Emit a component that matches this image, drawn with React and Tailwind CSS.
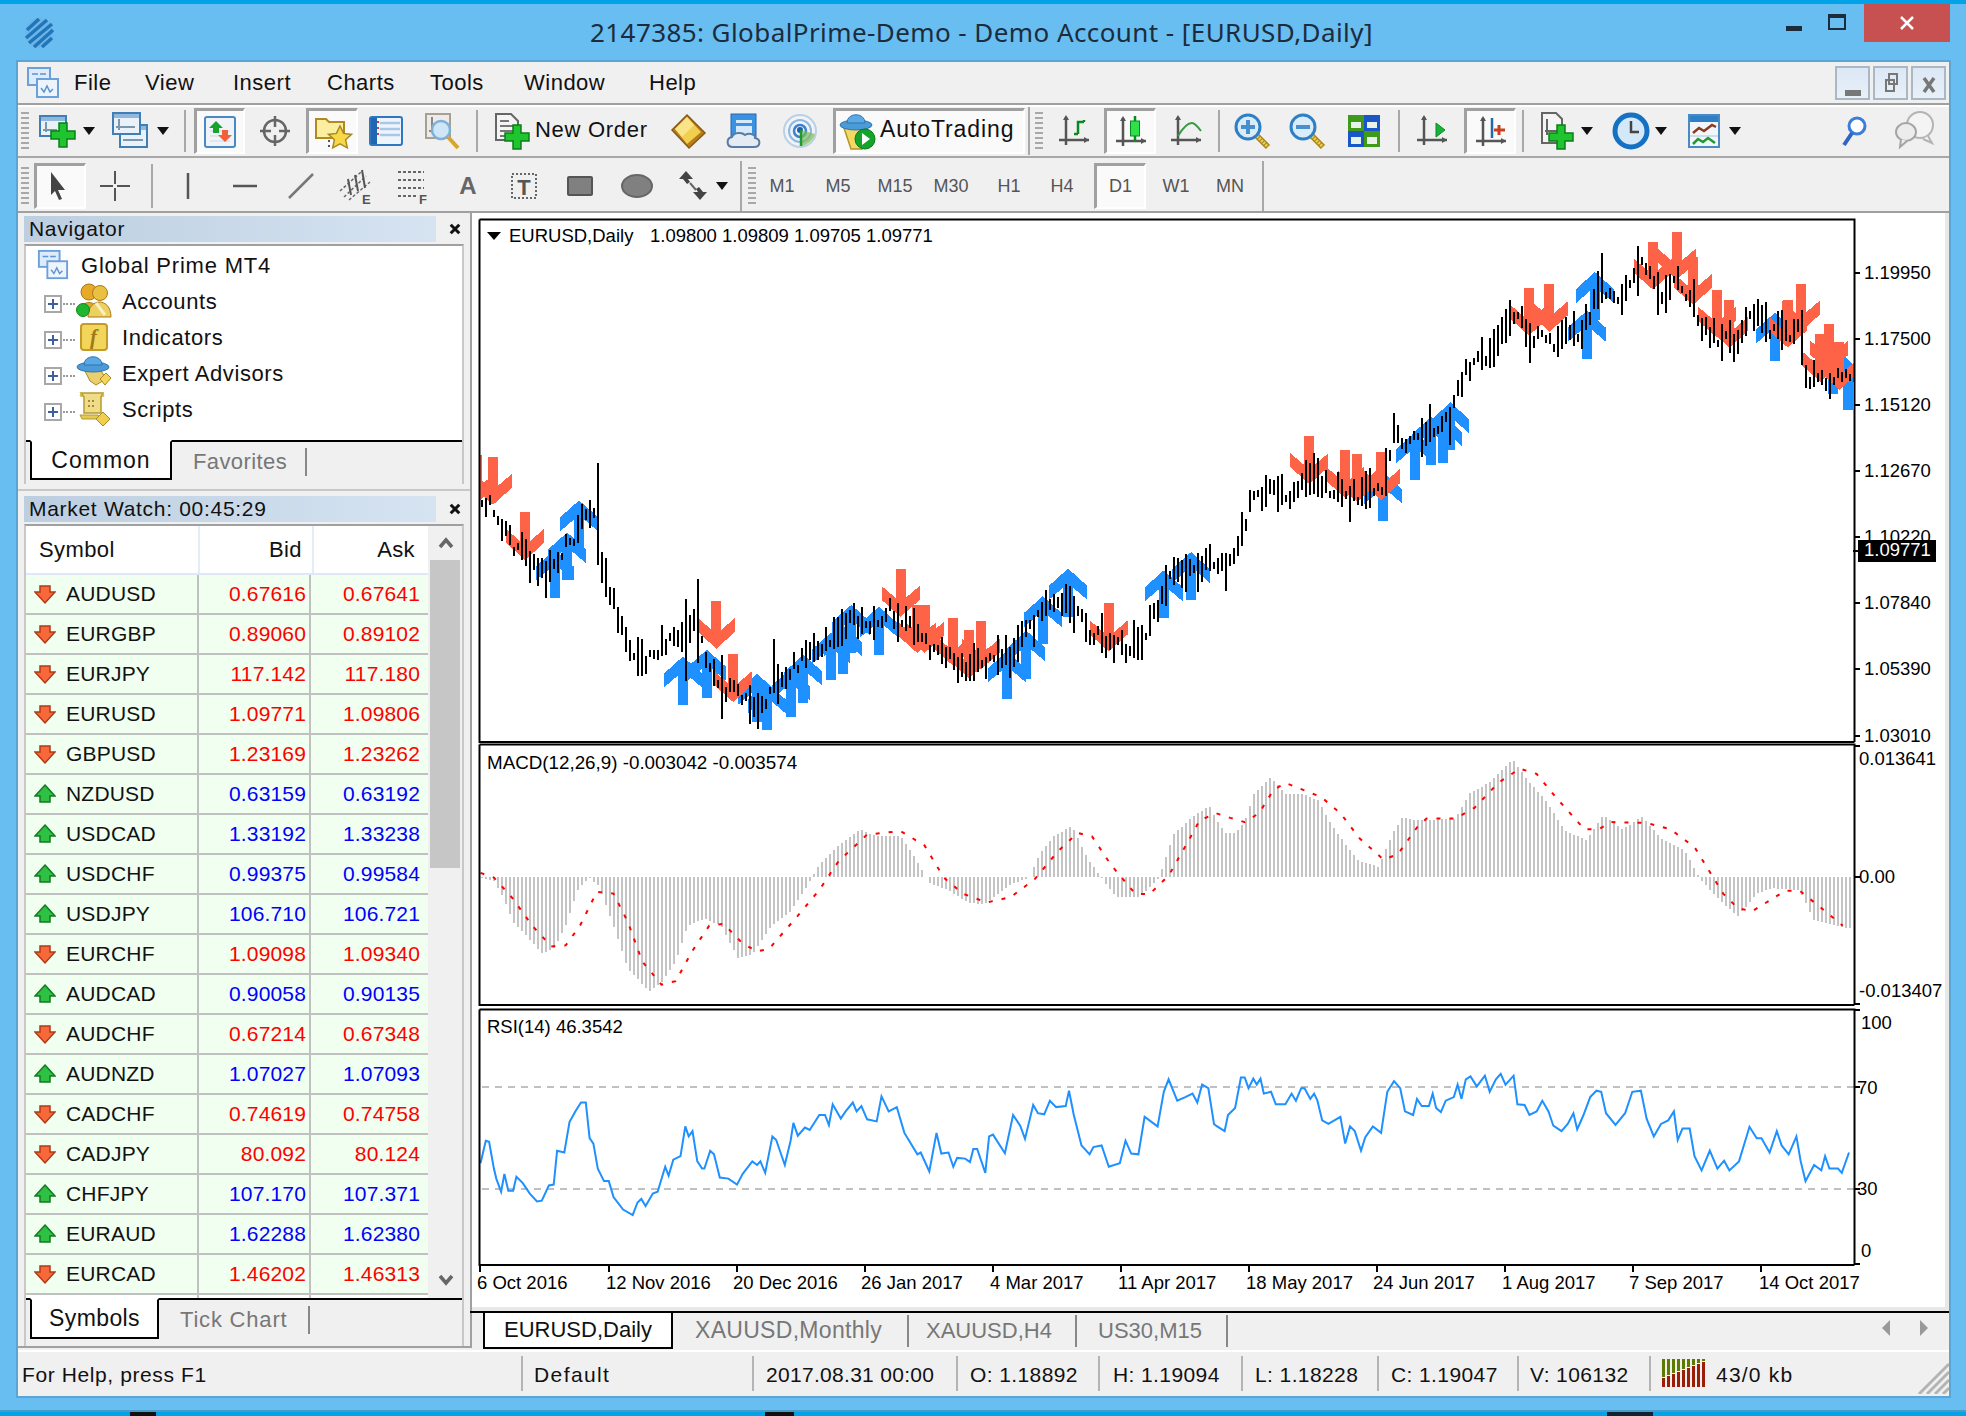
import React from "react";

// traced chart geometry, screen px come out of these two helpers
const leftX = (x) => 470 + x / 2.09;
const rightX = (x) => 1216 + x / 2.09;
const mainY = (y) => 210 + y / 2.9;
const lowY = (y) => 740 + y / 2.8;

const pts = (l, r, fy) => [
  ...l.map(([x, y]) => [leftX(x), fy(y)]),
  ...r.map(([x, y]) => [rightX(x), fy(y)]),
];

const pricePath = pts(
  [[20,830],[50,870],[60,920],[90,970],[125,1020],[150,1060],[180,1020],[210,960],[240,890],[262,900],[280,1060],[300,1140],[320,1210],[340,1290],[370,1310],[400,1270],[430,1250],[470,1200],[490,1280],[520,1370],[550,1400],[600,1430],[640,1400],[680,1320],[720,1280],[760,1230],[800,1190],[850,1190],[880,1160],[910,1190],[950,1260],[990,1290],[1020,1320],[1070,1320],[1100,1290],[1130,1290],[1170,1220],[1210,1150],[1250,1130],[1280,1200],[1330,1250],[1370,1270],[1400,1260],[1430,1180],[1470,1060],[1510,1050],[1560,1010]],
  [[25,1050],[50,950],[75,840],[100,810],[130,820],[155,820],[190,770],[225,800],[270,830],[310,840],[350,790],[370,650],[400,680],[440,640],[490,610],[520,470],[560,430],[600,340],[620,290],[660,370],[710,390],[740,360],[770,340],[805,230],[830,270],[860,240],[880,150],[910,190],[930,240],[960,200],[1000,260],[1015,350],[1060,370],[1080,390],[1120,300],[1160,350],[1220,350],[1240,480],[1290,490],[1325,480]],
  mainY
);

const histPath = pts(
  [[22,385],[50,395],[70,440],[90,510],[120,550],[150,598],[175,585],[200,520],[225,420],[250,385],[270,410],[300,520],[330,640],[375,705],[400,680],[430,620],[455,520],[490,500],[525,520],[560,610],[590,600],[630,520],[670,480],[700,420],[730,350],[770,295],[815,250],[850,270],[900,270],[930,330],[960,400],[1000,420],[1040,455],[1075,460],[1130,405],[1170,385],[1190,320],[1220,270],[1258,240],[1290,330],[1320,385],[1350,440],[1400,440],[1440,385],[1470,265],[1510,215],[1545,185]],
  [[0,220],[20,260],[40,260],[60,230],[80,150],[115,105],[145,150],[180,150],[215,170],[240,235],[270,290],[300,340],[340,355],[370,260],[390,215],[420,225],[500,220],[530,150],[570,120],[620,55],[650,110],[690,170],[730,255],[775,280],[810,210],[850,250],[890,215],[930,275],[980,310],[1010,385],[1040,430],[1090,495],[1130,430],[1160,415],[1220,420],[1250,505],[1310,525],[1325,525]],
  lowY
);

const signalPath = pts(
  [[22,372],[50,385],[90,445],[130,520],[170,578],[200,575],[230,520],[265,425],[300,430],[330,510],[360,620],[400,685],[430,675],[465,590],[500,520],[530,515],[570,570],[600,592],[625,585],[680,500],[730,420],[770,340],[830,265],[900,255],[950,295],[990,385],[1030,430],[1080,455],[1130,440],[1180,390],[1230,310],[1270,260],[1300,270],[1340,350],[1390,430],[1420,432],[1460,380],[1490,310],[1525,225]],
  [[0,205],[30,218],[60,230],[90,205],[120,140],[145,120],[220,160],[260,205],[300,275],[350,335],[380,320],[420,245],[440,220],[500,220],[540,190],[590,120],[635,80],[670,95],[710,160],[770,250],[800,250],[825,230],[900,232],[950,250],[1000,300],[1060,430],[1090,470],[1120,480],[1190,422],[1220,422],[1260,465],[1310,520]],
  lowY
);

const rsiPath = pts(
  [[22,1185],[33,1122],[40,1125],[50,1200],[55,1228],[65,1265],[72,1215],[80,1262],[90,1262],[97,1223],[110,1240],[125,1270],[140,1292],[150,1290],[165,1247],[175,1245],[182,1150],[197,1155],[208,1070],[220,1040],[232,1015],[242,1015],[250,1115],[258,1130],[267,1200],[280,1235],[290,1235],[300,1280],[320,1315],[340,1330],[350,1295],[358,1285],[367,1305],[382,1270],[392,1265],[408,1195],[415,1220],[425,1175],[440,1165],[450,1082],[457,1110],[465,1095],[475,1180],[485,1200],[490,1200],[502,1150],[510,1160],[522,1225],[540,1228],[558,1245],[570,1215],[590,1180],[600,1190],[607,1180],[617,1212],[632,1110],[640,1120],[658,1190],[670,1122],[676,1072],[685,1108],[700,1085],[710,1092],[730,1050],[742,1050],[750,1078],[758,1020],[775,1060],[785,1040],[800,1015],[808,1040],[818,1025],[830,1062],[850,1068],[860,998],[875,1040],[892,1028],[908,1100],[935,1160],[942,1155],[960,1208],[975,1100],[985,1158],[1000,1155],[1010,1195],[1018,1170],[1035,1172],[1045,1182],[1052,1145],[1060,1145],[1077,1212],[1085,1110],[1093,1105],[1118,1157],[1135,1050],[1150,1080],[1160,1117],[1177,1022],[1187,1045],[1200,1048],[1212,1010],[1225,1028],[1245,1025],[1252,982],[1262,1050],[1278,1135],[1295,1160],[1303,1140],[1320,1135],[1335,1195],[1358,1185],[1370,1122],[1382,1158],[1397,1160],[1410,1055],[1425,1070],[1437,1082],[1450,985],[1460,950],[1478,1010],[1495,1000],[1510,990],[1520,1015],[1530,965],[1543,975],[1555,1075]],
  [[0,1080],[18,1095],[25,1050],[40,1030],[52,945],[60,945],[68,975],[78,948],[85,965],[93,948],[100,990],[115,985],[125,1020],[145,1020],[158,990],[167,1010],[178,975],[185,975],[197,1005],[205,990],[212,1010],[222,1065],[235,1075],[260,1055],[270,1130],[280,1082],[290,1095],[303,1150],[312,1112],[328,1082],[345,1100],[358,985],[372,955],[385,975],[395,1040],[412,1050],[420,1005],[430,1025],[445,1025],[453,990],[460,1030],[470,1042],[480,1010],[497,1000],[505,965],[513,1005],[522,950],[532,942],[545,970],[562,940],[572,985],[585,950],[595,935],[605,965],[622,940],[630,1020],[645,1022],[655,1050],[670,1040],[682,1010],[695,1040],[705,1080],[722,1095],[735,1075],[747,1045],[755,1090],[768,1050],[782,1000],[795,982],[805,985],[815,1045],[835,1078],[855,1045],[870,985],[888,982],[900,1060],[915,1110],[930,1075],[945,1065],[957,1040],[965,1120],[975,1088],[990,1088],[1000,1165],[1015,1205],[1032,1150],[1048,1200],[1062,1178],[1073,1205],[1093,1180],[1115,1083],[1130,1115],[1140,1115],[1157,1155],[1172,1095],[1182,1135],[1197,1160],[1213,1110],[1222,1180],[1232,1235],[1250,1190],[1265,1205],[1273,1165],[1282,1200],[1300,1200],[1308,1212],[1323,1155]],
  lowY
);

const blueTips = [
  ...[[228,842],[203,935],[177,985],[445,1295],[495,1275],[600,1345],[620,1370],[670,1330],[697,1290],[755,1225],[780,1205],[797,1145],[855,1150],[1122,1280],[1163,1220],[1197,1120],[1250,1040],[1450,1045],[1507,992]].map(([x, y]) => [leftX(x), mainY(y)]),
  ...[[350,762],[416,645],[450,600],[474,594],[490,558],[775,292],[792,180],[1168,298],[1320,442],[1290,395]].map(([x, y]) => [rightX(x), mainY(y)]),
];
const redTips = [
  ...[[15,850],[48,855],[115,1015],[515,1272],[550,1427],[900,1180],[935,1285],[950,1285],[1010,1322],[1043,1358],[1068,1332],[1335,1280]].map(([x, y]) => [leftX(x), mainY(y)]),
  ...[[195,795],[270,835],[295,846],[345,841],[654,364],[697,353],[913,231],[963,202],[997,275],[1047,370],[1073,399],[1195,399],[1222,353],[1263,498],[1282,469],[1303,521]].map(([x, y]) => [rightX(x), mainY(y)]),
];

const spikes = [
  [leftX(265), mainY(735), mainY(1030)], [leftX(475), mainY(1070), mainY(1315)], [leftX(449), mainY(1128), mainY(1365)],
  [leftX(632), mainY(1245), mainY(1400)], [leftX(600), mainY(1400), mainY(1505)], [leftX(525), mainY(1290), mainY(1475)],
  [rightX(805), mainY(125), mainY(270)], [rightX(880), mainY(105), mainY(250)], [rightX(352), mainY(690), mainY(830)],
  [rightX(1225), mainY(290), mainY(450)], [rightX(1230), mainY(450), mainY(515)], [rightX(920), mainY(180), mainY(305)],
];

const lerp = (path, x) => {
  if (x <= path[0][0]) return path[0][1];
  for (let i = 1; i < path.length; i++) {
    if (x <= path[i][0]) {
      const [x0, y0] = path[i - 1];
      const [x1, y1] = path[i];
      return y0 + ((y1 - y0) * (x - x0)) / (x1 - x0);
    }
  }
  return path[path.length - 1][1];
};

let seed = 4711;
const rnd = () => {
  seed = (seed * 1103515245 + 12345) & 0x7fffffff;
  return seed / 0x7fffffff;
};

const stepXs = [];
for (let x = 482; x < 1853; x += 4) stepXs.push(x);

const bars = stepXs.map((x) => {
  const spike = spikes.find((s) => Math.abs(s[0] - x) <= 2);
  if (spike) return [x, spike[1], spike[2]];
  const mid = lerp(pricePath, x) + (rnd() - 0.5) * 16;
  const r = rnd();
  const h = 7 + r * r * 34;
  return [x, mid - h / 2, mid + h / 2];
});

const barsD = bars.map(([x, a, b]) => `M${x} ${a.toFixed(0)}V${b.toFixed(0)}`).join("");
const histD = stepXs.map((x) => `M${x} 877V${lerp(histPath, x).toFixed(0)}`).join("");
const signalLine = signalPath.map(([x, y]) => `${x.toFixed(1)},${y.toFixed(1)}`).join(" ");
const rsiLine = rsiPath.map(([x, y]) => `${x.toFixed(1)},${y.toFixed(1)}`).join(" ");

const upArrow = (x, y) =>
  `${x},${y} ${x + 19},${y + 17} ${x + 19},${y + 31} ${x + 5},${y + 19} ${x + 5},${y + 48} ${x - 5},${y + 48} ${x - 5},${y + 19} ${x - 19},${y + 31} ${x - 19},${y + 17}`;
const downArrow = (x, y) =>
  `${x},${y} ${x + 19},${y - 17} ${x + 19},${y - 31} ${x + 5},${y - 19} ${x + 5},${y - 48} ${x - 5},${y - 48} ${x - 5},${y - 19} ${x - 19},${y - 31} ${x - 19},${y - 17}`;

const priceLabels = [
  ["1.19950", 273], ["1.17500", 339], ["1.15120", 405], ["1.12670", 471],
  ["1.10220", 537], ["1.07840", 603], ["1.05390", 669], ["1.03010", 736],
];

const timeLabels = [
  ["6 Oct 2016", 477, 480], ["12 Nov 2016", 606, 609], ["20 Dec 2016", 733, 737], ["26 Jan 2017", 861, 865],
  ["4 Mar 2017", 990, 993], ["11 Apr 2017", 1118, 1121], ["18 May 2017", 1246, 1249], ["24 Jun 2017", 1373, 1377],
  ["1 Aug 2017", 1502, 1505], ["7 Sep 2017", 1629, 1633], ["14 Oct 2017", 1759, 1761],
];

const symbols = [
  ["AUDUSD", "0.67616", "0.67641", "down"], ["EURGBP", "0.89060", "0.89102", "down"],
  ["EURJPY", "117.142", "117.180", "down"], ["EURUSD", "1.09771", "1.09806", "down"],
  ["GBPUSD", "1.23169", "1.23262", "down"], ["NZDUSD", "0.63159", "0.63192", "up"],
  ["USDCAD", "1.33192", "1.33238", "up"], ["USDCHF", "0.99375", "0.99584", "up"],
  ["USDJPY", "106.710", "106.721", "up"], ["EURCHF", "1.09098", "1.09340", "down"],
  ["AUDCAD", "0.90058", "0.90135", "up"], ["AUDCHF", "0.67214", "0.67348", "down"],
  ["AUDNZD", "1.07027", "1.07093", "up"], ["CADCHF", "0.74619", "0.74758", "down"],
  ["CADJPY", "80.092", "80.124", "down"], ["CHFJPY", "107.170", "107.371", "up"],
  ["EURAUD", "1.62288", "1.62380", "up"], ["EURCAD", "1.46202", "1.46313", "down"],
];

const textProps = { fontFamily: "'Liberation Sans', sans-serif", fontSize: 18.5, fill: "#000", dominantBaseline: "middle", dy: 1 };

/* ---------- small icons ---------- */

const Svg = ({ size = 36, box = 36, children, className = "" }) => (
  <svg width={size} height={size} viewBox={`0 0 ${box} ${box}`} className={`overflow-visible ${className}`}>
    {children}
  </svg>
);

const Plus = ({ x = 20, y = 20 }) => (
  <path
    transform={`translate(${x} ${y})`}
    d="M-4 -12h8v8h8v8h-8v8h-8v-8h-8v-8h8z"
    fill="#1fc52f"
    stroke="#0b7d17"
    strokeWidth="1.5"
  />
);

const Win = ({ x, y, w, h }) => (
  <g>
    <rect x={x} y={y} width={w} height={h} fill="#eaf1f9" stroke="#3f7fb8" strokeWidth="2" />
    <rect x={x + 1} y={y + 1} width={w - 2} height="4" fill="#8fb8dc" />
  </g>
);

const Axes = ({ children }) => (
  <Svg>
    <path d="M10 4v28M3 27h30" stroke="#555" strokeWidth="2.5" fill="none" />
    <path d="M10 2l-3 5h6zM33 27l-5-3v6z" fill="#555" />
    {children}
  </Svg>
);

const NewChartIcon = () => (
  <Svg>
    <Win x={1} y={3} w={26} h={20} />
    <path d="M7 9v10M4 17h14" stroke="#7a97ad" strokeWidth="2" />
    <Plus x={24} y={22} />
  </Svg>
);
const ProfilesIcon = () => (
  <Svg size={40} box={40}>
    <Win x={9} y={14} w={27} h={22} />
    <path d="M12 29h20" stroke="#7a97ad" strokeWidth="2" />
    <Win x={2} y={2} w={27} h={21} />
    <path d="M8 8v11M5 16h19" stroke="#7a97ad" strokeWidth="2" />
  </Svg>
);
const MarketIcon = () => (
  <Svg>
    <rect x="3" y="3" width="30" height="30" rx="2" fill="#f0f4f8" stroke="#4a8ac4" strokeWidth="2" />
    <path d="M8 17h20M8 22h20M8 27h20" stroke="#d0d8de" />
    <path d="M14 7l7 7h-4v5h-6v-5h-4z" fill="#18a32a" />
    <path d="M23 28l7-7h-4v-5h-6v5h-4z" fill="#f0603a" />
  </Svg>
);
const CrosshairIcon = () => (
  <Svg>
    <circle cx="18" cy="18" r="11" fill="none" stroke="#666" strokeWidth="2.5" />
    <path d="M18 3v11M18 22v11M3 18h11M22 18h11" stroke="#666" strokeWidth="2.5" />
  </Svg>
);
const FolderStarIcon = () => (
  <Svg size={38} box={38}>
    <path d="M2 6h10l3 3h15v16H2z" fill="#fbeea0" stroke="#b08a20" strokeWidth="2" />
    <path d="M26 13l3.6 7.4 8 1-6 5.400 1.700 8-7.300-4-7.300 4 1.700-8-6-5.400 8-1z" fill="#f8d848" stroke="#a88a20" strokeWidth="1.500" />
    <path d="M15 27v10" stroke="#555" strokeWidth="2" strokeDasharray="2 3" />
  </Svg>
);
const TerminalIcon = () => (
  <Svg>
    <rect x="2" y="4" width="32" height="28" rx="2" fill="#eef4fb" stroke="#2f78c0" strokeWidth="2" />
    <rect x="3" y="5" width="6" height="26" fill="#1f67b0" />
    <path d="M12 10h20M12 16h20M12 22h20" stroke="#a9c8e6" strokeWidth="2.500" />
    <path d="M9 9h2M9 15h2M9 21h2" stroke="#d33" strokeWidth="2" />
  </Svg>
);
const TesterIcon = () => (
  <Svg size={38} box={38}>
    <rect x="2" y="2" width="24" height="24" fill="#eceaea" stroke="#a8a08f" strokeWidth="2" />
    <path d="M8 5v16M5 19h16" stroke="#888" strokeWidth="2" />
    <circle cx="17" cy="18" r="9" fill="#cfe6f6" stroke="#7fb0d6" strokeWidth="2.500" />
    <path d="M24 25l10 11" stroke="#d8a52a" strokeWidth="4" />
  </Svg>
);
const DocPlusIcon = () => (
  <Svg size={38} box={38}>
    <path d="M3 2h15l7 7v19H3z" fill="#f4f4f4" stroke="#666" strokeWidth="2" />
    <path d="M7 9h9M7 14h14M7 19h14M7 24h8" stroke="#777" strokeWidth="2" />
    <Plus x={24} y={25} />
  </Svg>
);
const DiamondIcon = () => (
  <Svg>
    <path d="M17 2L35 20L19 35L2 17z" fill="#b87c18" stroke="#8a5a14" strokeWidth="1.500" />
    <path d="M17 4L31 19L17 31L5 16z" fill="#f2cf4e" />
    <path d="M17 4L24 12L12 24L5 16z" fill="#f9e488" />
  </Svg>
);
const CloudDocIcon = () => (
  <Svg>
    <rect x="5" y="1" width="25" height="24" fill="#3a92e0" stroke="#2268b0" />
    <path d="M10 7h16v3H10zM10 13h16v8H10z" fill="#d6e9fa" />
    <path d="M7 34c-7 0-7-9-1-10 2-5 10-5 13-2 5-3 11 0 10 3 6 1 6 9-1 9z" fill="#e4ebf3" stroke="#5a7ca4" strokeWidth="2" />
  </Svg>
);
const SignalIcon = () => (
  <Svg>
    <circle cx="18" cy="18" r="16" fill="#f0f4f8" stroke="#bcd0e4" strokeWidth="2" />
    <circle cx="18" cy="18" r="11" fill="none" stroke="#8fb8e0" strokeWidth="2" />
    <circle cx="18" cy="18" r="6" fill="none" stroke="#3b82d0" strokeWidth="2.500" />
    <circle cx="18" cy="17" r="3" fill="#1f5fb0" />
    <path d="M19 17v16c6-1 12-5 14-12" fill="#7cbc58" opacity="0.7" />
    <path d="M19 17v16" stroke="#1f9a30" strokeWidth="2.500" />
  </Svg>
);
const HatShape = () => (
  <g>
    <ellipse cx="17" cy="12" rx="16" ry="5" fill="#4a9bd8" stroke="#2c74b0" />
    <path d="M8 10c0-11 18-11 18 0z" fill="#5aa9e2" stroke="#2c74b0" />
  </g>
);
const AutoIcon = () => (
  <Svg size={38} box={38}>
    <path d="M5 15l23 1-5 20H12z" fill="#f3d964" stroke="#b79328" strokeWidth="1.500" />
    <HatShape />
    <circle cx="26" cy="26" r="10" fill="#15a32a" stroke="#0a7a18" />
    <path d="M23 20l8 6-8 6z" fill="#fff" />
  </Svg>
);
const BarsIcon = () => (
  <Axes>
    <path d="M22 21v-12h6M22 21h-4M28 9v-2" stroke="#0a8a1c" strokeWidth="2.500" fill="none" />
  </Axes>
);
const CandleIcon = () => (
  <Axes>
    <path d="M22 2v26" stroke="#0a8a1c" strokeWidth="2.500" />
    <rect x="17.500" y="7" width="9" height="15" fill="#2fe04a" stroke="#0a8a1c" />
  </Axes>
);
const LineIcon = () => (
  <Axes>
    <path d="M10 23c6-10 10-13 14-13 3 0 6 4 9 8" stroke="#3a9a40" strokeWidth="2" fill="none" />
  </Axes>
);
const ShiftIcon = () => (
  <Axes>
    <path d="M22 10l9 7-9 7z" fill="#16b23a" stroke="#0a8a1c" />
  </Axes>
);
const AutoScrollIcon = () => (
  <Axes>
    <path d="M19 4v20" stroke="#1f6aa8" strokeWidth="2.500" />
    <path d="M21 16h11M26 11v10" stroke="#c8401e" strokeWidth="3" />
  </Axes>
);
const ZoomIcon = ({ plus }) => (
  <Svg size={38} box={38}>
    <path d="M24 24l11 11" stroke="#a8861e" strokeWidth="6" />
    <path d="M24 24l11 11" stroke="#f0d050" strokeWidth="3" strokeDasharray="2 1" />
    <circle cx="15" cy="15" r="12" fill="#d9ecfa" stroke="#2f7fc4" strokeWidth="3" />
    <path d={plus ? "M8 15h14M15 8v14" : "M8 15h14"} stroke="#4a8fca" strokeWidth="4" />
  </Svg>
);
const GridIcon = () => (
  <Svg>
    <rect x="2" y="2" width="16" height="16" fill="#3e9a18" />
    <rect x="18" y="2" width="16" height="16" fill="#1a56c8" />
    <rect x="2" y="18" width="16" height="16" fill="#1a56c8" />
    <rect x="18" y="18" width="16" height="16" fill="#3e9a18" />
    <path d="M5 9h10v6H5zM21 9h10v6H21zM5 24h10v7H5zM21 24h10v7H21z" fill="#e8f2e8" />
  </Svg>
);
const IndicatorAddIcon = () => (
  <Svg size={40} box={40}>
    <path d="M3 2h14l6 6v24H3z" fill="#f4f4f4" stroke="#666" strokeWidth="2" />
    <path d="M8 8v16M6 20h12" stroke="#666" strokeWidth="2" />
    <Plus x={22} y={26} />
  </Svg>
);
const ClockIcon = () => (
  <Svg size={38} box={38}>
    <circle cx="19" cy="19" r="16" fill="#d4e9f8" stroke="#1471c4" strokeWidth="5" />
    <path d="M19 9v11h8" stroke="#444" strokeWidth="2.500" fill="none" />
  </Svg>
);
const TemplateIcon = () => (
  <Svg>
    <rect x="3" y="2" width="30" height="32" fill="#f2f6fa" stroke="#4a8ac4" strokeWidth="2" />
    <rect x="4" y="3" width="28" height="6" fill="#2f7fc4" />
    <path d="M7 20l6-5 5 3 8-6 4 2" stroke="#8c3a1e" strokeWidth="2.500" fill="none" />
    <path d="M7 31l5-5 5 3 5-4 7 5" stroke="#1e9a30" strokeWidth="2.500" fill="none" />
    <path d="M4 23h28" stroke="#a8c4dc" />
  </Svg>
);
const SearchIcon = () => (
  <Svg size={32} box={32}>
    <circle cx="20" cy="11" r="8" fill="#fff" stroke="#3b7ed8" strokeWidth="3" />
    <path d="M15 18L7 30" stroke="#2f66c4" strokeWidth="4" />
  </Svg>
);
const ChatIcon = () => (
  <Svg size={42} box={42}>
    <circle cx="26" cy="15" r="13" fill="#f4f4f4" stroke="#b4b4b4" strokeWidth="2" />
    <path d="M34 26l4 7-9-4" fill="#f4f4f4" stroke="#b4b4b4" strokeWidth="2" />
    <ellipse cx="12" cy="22" rx="10" ry="9" fill="#ececec" stroke="#a4a4a4" strokeWidth="2" />
    <path d="M7 29l-1 8 7-6" fill="#ececec" stroke="#a4a4a4" strokeWidth="2" />
  </Svg>
);

const ArrowTool = () => (
  <Svg size={30} box={30}>
    <path d="M5 0L5 23L9 19L13 28L16 27L12 18L19 18Z" fill="#444" />
  </Svg>
);
const CrossTool = () => (
  <Svg size={34} box={34}>
    <path d="M17 2v13M17 19v13M2 17h13M19 17h13" stroke="#555" strokeWidth="2" />
  </Svg>
);
const VLineTool = () => (
  <Svg size={30} box={30}>
    <path d="M15 2v26" stroke="#555" strokeWidth="2.500" />
  </Svg>
);
const HLineTool = () => (
  <Svg size={30} box={30}>
    <path d="M3 15h24" stroke="#555" strokeWidth="2.500" />
  </Svg>
);
const TrendTool = () => (
  <Svg size={30} box={30}>
    <path d="M3 27L27 3" stroke="#777" strokeWidth="2.500" />
  </Svg>
);
const FibChannelTool = () => (
  <Svg size={38} box={38}>
    <path d="M3 24L24 5M7 30L29 9M12 33L33 15" stroke="#666" strokeWidth="1.500" strokeDasharray="3 2" />
    <path d="M11 12l3 16M18 8l3 16M25 3l3 18" stroke="#555" strokeWidth="2" />
    <text x="25" y="37" fontFamily="'Liberation Sans', sans-serif" fontSize="13" fontWeight="700" fill="#555">E</text>
  </Svg>
);
const FibLinesTool = () => (
  <Svg size={38} box={38}>
    <path d="M4 5h26M4 13h26M4 21h26M4 29h18" stroke="#666" strokeWidth="2" strokeDasharray="3 2" />
    <text x="25" y="37" fontFamily="'Liberation Sans', sans-serif" fontSize="13" fontWeight="700" fill="#555">F</text>
  </Svg>
);
const TextTool = () => (
  <Svg size={30} box={30}>
    <rect x="3" y="3" width="24" height="24" fill="none" stroke="#666" strokeWidth="2" strokeDasharray="2 2" />
    <text x="15" y="24" textAnchor="middle" fontFamily="'Liberation Sans', sans-serif" fontSize="22" fontWeight="700" fill="#555">T</text>
  </Svg>
);
const RectTool = () => (
  <div className="w-[26px] h-[20px] bg-[#808080] border-2 border-[#555] rounded-[2px]" />
);
const EllipseTool = () => (
  <svg width="32" height="24" viewBox="0 0 32 24">
    <ellipse cx="16" cy="12" rx="15" ry="11" fill="#808080" stroke="#666" strokeWidth="2" />
  </svg>
);
const ArrowsTool = () => (
  <Svg size={30} box={30}>
    <path d="M8 0l7 8h-5l2 3-3 2-4-5H1zM22 29l-7-8h5l-2-3 3-2 4 5h4z" fill="#444" />
    <path d="M12 12l6 7" stroke="#666" strokeWidth="2" />
  </Svg>
);

const WindowIcon = ({ size = 34 }) => (
  <Svg size={size} box={34}>
    <rect x="2" y="2" width="22" height="17" fill="#dfeafa" stroke="#6aa0dc" strokeWidth="2" />
    <rect x="11" y="13" width="21" height="18" fill="#eef4fc" stroke="#6aa0dc" strokeWidth="2" />
    <path d="M6 8h6M14 8h6M15 22l3 4 3-6 3 6 3-3" stroke="#5a94d4" strokeWidth="1.500" fill="none" />
  </Svg>
);
const AccountsIcon = () => (
  <Svg>
    <circle cx="13" cy="9" r="8" fill="#e8a828" stroke="#a87a18" />
    <circle cx="24" cy="10" r="7.500" fill="#e9c040" stroke="#a87a18" />
    <path d="M4 30c0-14 18-14 18 0z" fill="#e0a828" stroke="#a87a18" />
    <path d="M12 34c0-20 23-20 23 0z" fill="#ecd060" stroke="#a87a18" />
    <path d="M20 20l9 12" stroke="#f8f0c0" strokeWidth="3" />
    <circle cx="7" cy="27" r="6.500" fill="#1fb52f" stroke="#0a8a1c" />
  </Svg>
);
const IndicatorsIcon = () => (
  <div className="w-[28px] h-[28px] rounded-[4px] bg-[#f2d65c] border-2 border-[#c49a28] flex items-center justify-center">
    <span className="[font-family:'Liberation_Serif',serif] italic font-bold text-[21px] leading-none text-[#a07818]">f</span>
  </div>
);
const AdvisorsIcon = () => (
  <Svg>
    <path d="M8 14l6 12 6 4 10-6-6-10z" fill="#e9cf70" stroke="#a88a20" />
    <path d="M24 24l6-6 5 5-6 7z" fill="#f3d55a" stroke="#a88a20" />
    <HatShape />
  </Svg>
);
const ScriptsIcon = () => (
  <Svg>
    <path d="M5 2h22l-2 4v16H8V6z" fill="#f0dc86" stroke="#b49a30" strokeWidth="1.500" />
    <path d="M5 2c-2 2-2 4 2 4M27 2c2 2 2 4-1 4" fill="#d8b840" />
    <path d="M4 24h18l3 4H6z" fill="#e4c850" stroke="#b49a30" />
    <path d="M12 10h8M12 15h8" stroke="#a08a40" strokeWidth="2" strokeDasharray="2 2" />
    <path d="M27 21l7 7-7 7-7-7z" fill="#f0cf50" stroke="#a88a20" />
  </Svg>
);
const PlusBox = () => (
  <div className="w-[18px] h-[18px] border-2 border-[#a8a8a8] bg-white flex items-center justify-center shrink-0">
    <svg width="12" height="12" viewBox="0 0 12 12">
      <path d="M1 6h10M6 1v10" stroke="#3f5f9f" strokeWidth="2" />
    </svg>
  </div>
);
const TickArrow = ({ dir }) =>
  dir === "up" ? (
    <svg width="22" height="22" viewBox="0 0 22 22">
      <path d="M11 2l10 11h-5v6H6v-6H1z" fill="#2fc046" stroke="#127a1f" strokeWidth="1.500" />
    </svg>
  ) : (
    <svg width="22" height="22" viewBox="0 0 22 22">
      <path d="M6 3h10v6h5L11 20 1 9h5z" fill="#f8683a" stroke="#b03a14" strokeWidth="1.500" />
    </svg>
  );

const Caret = () => (
  <svg width="12" height="8" viewBox="0 0 12 8">
    <path d="M0 0h12L6 8z" fill="#111" />
  </svg>
);
const CloseX = () => (
  <svg width="12" height="12" viewBox="0 0 14 14">
    <path d="M2 2l10 10M12 2L2 12" stroke="#111" strokeWidth="3.500" />
  </svg>
);

/* ---------- toolbar pieces ---------- */

const Slot = ({ className = "", children }) => (
  <div className={`shrink-0 h-full flex items-center justify-center ${className}`}>{children}</div>
);
const Pressed = ({ className = "", children }) => (
  <div className={`shrink-0 h-[46px] self-center flex items-center justify-center bg-[#fafafa] border-t-[3px] border-l-[3px] border-t-[#a0a0a0] border-l-[#a0a0a0] border-r-2 border-b-2 border-r-white border-b-white ${className}`}>
    {children}
  </div>
);
const Sep = ({ className = "" }) => <div className={`shrink-0 w-[2px] h-[42px] self-center bg-[#a8a8a8] ${className}`} />;
const Grip = ({ className = "" }) => (
  <div className={`shrink-0 w-[8px] h-[38px] self-center bg-[repeating-linear-gradient(to_bottom,#a8a8a8_0,#a8a8a8_2px,transparent_2px,transparent_5px)] ${className}`} />
);
const Period = ({ className = "", children }) => (
  <Slot className={`text-[#555] text-[18px] ${className}`}>{children}</Slot>
);

const TitleStrip = ({ text, className = "" }) => (
  <div className={`flex items-center ml-[6px] ${className}`}>
    <div className="w-[412px] h-[26px] pl-[5px] flex items-center text-[21px] tracking-[0.7px] text-[#111] bg-gradient-to-r from-[#bccee0] to-[#d6e4f2]">{text}</div>
    <div className="w-[28px] pl-[9px] flex justify-center"><CloseX /></div>
  </div>
);

const TreeRow = ({ icon, label }) => (
  <div className="flex items-center h-[36px] pl-[18px]">
    <div className="mt-[6px] flex items-center">
      <PlusBox />
      <div className="w-[12px] mx-[1px] border-t-2 border-dotted border-[#999]" />
    </div>
    <div className="w-[35px] flex justify-center">{icon}</div>
    <div className="ml-[11px] text-[22px] tracking-[0.6px] text-[#111]">{label}</div>
  </div>
);

const StatusCell = ({ className = "", children }) => (
  <div className={`shrink-0 h-[35px] pt-[3px] flex items-center text-[21px] text-[#111] border-r-2 border-[#b4b4b4] ${className}`}>{children}</div>
);

export default function App() {
  return (
    <div className="w-[1966px] h-[1416px] overflow-hidden flex flex-col bg-[#68bdf1] [font-family:'Liberation_Sans',sans-serif]">
      {/* window title bar */}
      <div className="h-[60px] shrink-0 flex items-start border-t-4 border-[#00a2e8]">
        <svg width="30" height="30" viewBox="0 0 30 30" className="ml-[24px] mt-[14px]">
          <ellipse cx="15" cy="15" rx="14" ry="15" fill="#6fb4e6" />
          <path d="M3 12L15 1M2 20L23 2M5 25L28 6M10 29L29 12M18 29L28 20" stroke="#1f76b8" strokeWidth="3.500" />
        </svg>
        <div className="ml-[536px] mt-[10px] text-[26px] leading-[36px] tracking-[0.42px] text-[#1c2c3c] [font-family:'Noto_Sans',sans-serif]">
          2147385: GlobalPrime-Demo - Demo Account - [EURUSD,Daily]
        </div>
        <div className="ml-auto flex items-start">
          <div className="mt-[22px] w-[16px] h-[5px] bg-[#1c2c3c]" />
          <div className="ml-[26px] mt-[10px] w-[18px] h-[16px] border-2 border-t-4 border-[#1c2c3c]" />
          <div className="ml-[18px] w-[86px] h-[38px] bg-[#c75050] flex items-center justify-center text-white text-[22px] font-bold">
            <svg width="14" height="14" viewBox="0 0 14 14"><path d="M1 1l12 12M13 1L1 13" stroke="#fff" strokeWidth="2.500" /></svg>
          </div>
          <div className="w-[16px]" />
        </div>
      </div>

      {/* client area */}
      <div className="ml-[16px] w-[1935px] h-[1338px] shrink-0 flex flex-col border-2 border-[#5aa5d2] bg-[#f0f0f0]">
        {/* menu */}
        <div className="h-[41px] shrink-0 flex items-center text-[22px] text-[#111] tracking-[0.5px]">
          <div className="ml-[8px] w-[48px]"><WindowIcon /></div>
          <div className="w-[71px] ml-[0px]">File</div>
          <div className="w-[88px]">View</div>
          <div className="w-[94px]">Insert</div>
          <div className="w-[103px]">Charts</div>
          <div className="w-[94px]">Tools</div>
          <div className="w-[125px]">Window</div>
          <div>Help</div>
          <div className="ml-auto mr-[3px] flex gap-[3px]">
            {["M2 22h14v4H2z", "M7 5h8v10H7zM4 11h8v11H4z", "M4 9l10 14M14 9L4 23"].map((d, i) => (
              <div key={i} className="w-[35px] h-[34px] border-2 border-[#a9b8c4] bg-gradient-to-b from-[#dce8f5] to-[#e8f0f8] flex items-center justify-center">
                <svg width="18" height="28" viewBox="0 0 18 28">
                  <path d={d} fill={i === 0 ? "#777" : "none"} stroke="#777" strokeWidth={i === 2 ? 3.5 : 2} />
                </svg>
              </div>
            ))}
          </div>
        </div>

        {/* main toolbar */}
        <div className="h-[53px] shrink-0 flex items-stretch pt-[1px] border-t-2 border-[#a0a0a0] shadow-[inset_0_2px_0_#ffffff]">
          <Grip className="ml-[3px]" />
          <Slot className="w-[50px] ml-[3px]"><NewChartIcon /></Slot>
          <Slot className="w-[14px]"><Caret /></Slot>
          <Slot className="w-[50px] ml-[10px]"><ProfilesIcon /></Slot>
          <Slot className="w-[14px]"><Caret /></Slot>
          <Sep className="ml-[14px]" />
          <Pressed className="ml-[8px] w-[51px]"><MarketIcon /></Pressed>
          <Slot className="w-[60px]"><CrosshairIcon /></Slot>
          <Pressed className="ml-[1px] w-[52px]"><FolderStarIcon /></Pressed>
          <Slot className="w-[56px]"><TerminalIcon /></Slot>
          <Slot className="w-[58px]"><TesterIcon /></Slot>
          <Sep className="ml-[4px]" />
          <Slot className="w-[36px] ml-[16px]"><DocPlusIcon /></Slot>
          <Slot className="w-[112px] ml-[5px] justify-start whitespace-nowrap text-[22px] tracking-[0.7px] text-[#111] pb-[4px]">New Order</Slot>
          <Slot className="w-[82px]"><DiamondIcon /></Slot>
          <Slot className="w-[30px]"><CloudDocIcon /></Slot>
          <Slot className="w-[40px] ml-[21px]"><SignalIcon /></Slot>
          <Pressed className="ml-[13px] w-[192px] justify-start pl-[3px] text-[23px] tracking-[0.9px] text-[#111]">
            <AutoIcon />
            <span className="ml-[3px] pb-[4px]">AutoTrading</span>
          </Pressed>
          <Sep className="ml-[3px] h-[48px]" />
          <Grip className="ml-[5px]" />
          <Slot className="w-[61px]"><BarsIcon /></Slot>
          <Pressed className="w-[52px]"><CandleIcon /></Pressed>
          <Slot className="w-[60px]"><LineIcon /></Slot>
          <Sep className="ml-[2px]" />
          <Slot className="w-[64px]"><ZoomIcon plus /></Slot>
          <Slot className="w-[46px]"><ZoomIcon /></Slot>
          <Slot className="w-[68px]"><GridIcon /></Slot>
          <Sep />
          <Slot className="w-[64px]"><ShiftIcon /></Slot>
          <Pressed className="w-[52px]"><AutoScrollIcon /></Pressed>
          <Sep className="ml-[6px]" />
          <Slot className="w-[38px] ml-[16px]"><IndicatorAddIcon /></Slot>
          <Slot className="w-[18px]"><Caret /></Slot>
          <Slot className="w-[38px] ml-[16px]"><ClockIcon /></Slot>
          <Slot className="w-[18px] ml-[2px]"><Caret /></Slot>
          <Slot className="w-[38px] ml-[15px]"><TemplateIcon /></Slot>
          <Slot className="w-[18px] ml-[3px]"><Caret /></Slot>
          <Slot className="w-[40px] ml-[89px]"><SearchIcon /></Slot>
          <Slot className="w-[44px] ml-[20px]"><ChatIcon /></Slot>
        </div>

        {/* drawing and period toolbar */}
        <div className="h-[55px] shrink-0 flex items-stretch pt-[3px] border-t-2 border-[#a8a8a8]">
          <Grip className="ml-[3px]" />
          <Pressed className="ml-[5px] w-[52px]"><ArrowTool /></Pressed>
          <Slot className="w-[58px]"><CrossTool /></Slot>
          <Sep className="ml-[7px] h-[44px]" />
          <Slot className="w-[70px]"><VLineTool /></Slot>
          <Slot className="w-[44px]"><HLineTool /></Slot>
          <Slot className="w-[68px]"><TrendTool /></Slot>
          <Slot className="w-[42px]"><FibChannelTool /></Slot>
          <Slot className="w-[72px]"><FibLinesTool /></Slot>
          <Slot className="w-[38px] text-[#666] text-[24px] font-bold">A</Slot>
          <Slot className="w-[74px]"><TextTool /></Slot>
          <Slot className="w-[38px]"><RectTool /></Slot>
          <Slot className="w-[76px]"><EllipseTool /></Slot>
          <Slot className="w-[36px]"><ArrowsTool /></Slot>
          <Slot className="w-[22px]"><Caret /></Slot>
          <Sep className="ml-[7px] h-[50px]" />
          <Grip className="ml-[6px]" />
          <Period className="w-[44px] ml-[4px]">M1</Period>
          <Period className="w-[56px] ml-[6px]">M5</Period>
          <Period className="w-[58px]">M15</Period>
          <Period className="w-[54px]">M30</Period>
          <Period className="w-[62px]">H1</Period>
          <Period className="w-[44px]">H4</Period>
          <Pressed className="ml-[10px] w-[52px] text-[#555] text-[18px]">D1</Pressed>
          <Period className="w-[60px]">W1</Period>
          <Period className="w-[48px]">MN</Period>
          <Sep className="ml-[8px] h-[50px]" />
        </div>

        {/* panels and charts */}
        <div className="h-[1139px] shrink-0 flex border-t-2 border-[#a0a0a0]">
          {/* left dock */}
          <div className="w-[454px] h-[1135px] shrink-0 pt-[3px] flex flex-col border-r-2 border-b-2 border-[#a0a0a0]">
            <TitleStrip text="Navigator" />
            <div className="ml-[6px] mt-[2px] w-[440px] h-[240px] shrink-0 flex flex-col border-t-2 border-x-2 border-t-[#a0a0a0] border-x-[#c8c8c8]">
              <div className="h-[194px] shrink-0 bg-white pt-[1px]">
                <div className="flex items-center h-[36px] pl-[11px]">
                  <WindowIcon size={32} />
                  <div className="ml-[12px] text-[22px] tracking-[0.8px] text-[#111]">Global Prime MT4</div>
                </div>
                <TreeRow icon={<AccountsIcon />} label="Accounts" />
                <TreeRow icon={<IndicatorsIcon />} label="Indicators" />
                <TreeRow icon={<AdvisorsIcon />} label="Expert Advisors" />
                <TreeRow icon={<ScriptsIcon />} label="Scripts" />
              </div>
              <div className="flex-1 flex items-start border-t-2 border-black">
                <div className="ml-[4px] -mt-[2px] w-[142px] h-[40px] flex items-center justify-center bg-white border-x-2 border-b-2 border-black border-t-2 border-t-white text-[23px] tracking-[1px] text-[#111]">Common</div>
                <div className="ml-[21px] mt-[3px] w-[112px] text-[22px] tracking-[0.4px] text-[#777]">Favorites</div>
                <div className="mt-[6px] w-[2px] h-[28px] bg-[#888]" />
              </div>
            </div>
            <div className="mt-[5px] h-[2px] shrink-0 bg-[#c8c8c8]" />
            <TitleStrip text="Market Watch: 00:45:29" className="mt-[5px]" />
            <div className="ml-[6px] mt-[2px] w-[440px] flex-1 flex flex-col border-t-2 border-x-2 border-t-[#a0a0a0] border-x-[#c8c8c8]">
              <div className="h-[772px] shrink-0 flex overflow-hidden">
                <div className="w-[402px] shrink-0 bg-white">
                  <div className="h-[49px] flex border-b-2 border-[#dfe8f7] text-[22px] text-[#111] tracking-[0.4px] bg-white">
                    <div className="w-[174px] pl-[13px] flex items-center border-r-2 border-[#e4ecf8]">Symbol</div>
                    <div className="w-[114px] pr-[10px] flex items-center justify-end border-r-2 border-[#e4ecf8]">Bid</div>
                    <div className="w-[114px] pr-[13px] flex items-center justify-end">Ask</div>
                  </div>
                  {symbols.map(([sym, bid, ask, dir]) => {
                    const tone = dir === "up" ? "text-[#0000ff]" : "text-[#ff0000]";
                    return (
                      <div key={sym} className="h-[40px] flex bg-[#f0fff0] border-b-2 border-[#c0c0c0] text-[21px]">
                        <div className="w-[173px] flex items-center pl-[8px] text-[#111] border-r-2 border-[#c0c0c0]">
                          <TickArrow dir={dir} />
                          <span className="ml-[10px] tracking-[0.2px]">{sym}</span>
                        </div>
                        <div className={`w-[112px] flex items-center justify-end pr-[3px] tracking-[0.15px] border-r-2 border-[#c0c0c0] ${tone}`}>{bid}</div>
                        <div className={`w-[117px] flex items-center justify-end pr-[8px] tracking-[0.15px] ${tone}`}>{ask}</div>
                      </div>
                    );
                  })}
                  <div className="h-[40px] flex border-b-2 border-[#c0c0c0]">
                    <div className="w-[173px] border-r-2 border-[#c0c0c0]" />
                    <div className="w-[112px] border-r-2 border-[#c0c0c0]" />
                  </div>
                </div>
                <div className="ml-[2px] w-[32px] shrink-0 flex flex-col items-center">
                  <div className="h-[34px] w-full flex items-center justify-center">
                    <svg width="16" height="12" viewBox="0 0 16 12"><path d="M2 10l6-7 6 7" fill="none" stroke="#666" strokeWidth="3.500" /></svg>
                  </div>
                  <div className="w-[30px] h-[308px] self-start bg-[#c6c6c6]" />
                  <div className="mt-auto mb-[8px] h-[20px] flex items-center">
                    <svg width="16" height="12" viewBox="0 0 16 12"><path d="M2 2l6 7 6-7" fill="none" stroke="#666" strokeWidth="3.500" /></svg>
                  </div>
                </div>
              </div>
              <div className="flex-1 flex items-start border-t-2 border-black">
                <div className="ml-[4px] -mt-[2px] w-[129px] h-[41px] flex items-center justify-center bg-white border-x-2 border-b-2 border-black border-t-2 border-t-white text-[23px] tracking-[0.4px] text-[#111]">Symbols</div>
                <div className="ml-[21px] mt-[3px] w-[128px] text-[22px] tracking-[0.8px] text-[#777]">Tick Chart</div>
                <div className="mt-[6px] w-[2px] h-[28px] bg-[#888]" />
              </div>
            </div>
          </div>

          {/* charts */}
          <div className="w-[1477px] shrink-0 flex flex-col">
            <div className="h-[1098px] shrink-0 flex flex-col bg-white border-r-4 border-b-4 border-[#e8e8e8]">
              <svg width="1473" height="530" viewBox="472 213 1473 530" className="shrink-0 overflow-visible">
                <clipPath id="plot-area">
                  <rect x="480" y="220" width="1374" height="521" />
                </clipPath>
                <g shapeRendering="crispEdges" clipPath="url(#plot-area)">
                  {blueTips.map(([x, y], i) => (
                    <polygon key={i} points={upArrow(x, y)} fill="#1e90ff" />
                  ))}
                  {redTips.map(([x, y], i) => (
                    <polygon key={i} points={downArrow(x, y)} fill="#ff6347" />
                  ))}
                  <path d={barsD} stroke="#000" strokeWidth="2" />
                </g>
                <path d="M479.500 219.500H1854.500V742M479.500 219.500V742H1854.500" fill="none" stroke="#000" strokeWidth="2" />
                {priceLabels.map(([t, y]) => (
                  <g key={t}>
                    <path d={`M1854 ${y}h6`} stroke="#000" strokeWidth="2" />
                    <text {...textProps} x="1864" y={y}>{t}</text>
                  </g>
                ))}
                <path d="M1853 551h5" stroke="#000" strokeWidth="2" />
                <rect x="1858" y="540" width="78" height="22" fill="#000" />
                <text {...textProps} x="1864" y="550" fill="#fff">1.09771</text>
                <path d="M487 232h14l-7 8z" fill="#000" />
                <text {...textProps} x="509" y="236">EURUSD,Daily</text>
                <text {...textProps} x="650" y="236">1.09800 1.09809 1.09705 1.09771</text>
              </svg>
              <svg width="1473" height="264" viewBox="472 743 1473 264" className="shrink-0 overflow-visible">
                <path d={histD} stroke="#c4c4c4" strokeWidth="2" shapeRendering="crispEdges" />
                <polyline points={signalLine} fill="none" stroke="#ff0000" strokeWidth="2" strokeDasharray="4 9" />
                <path d="M479.500 744.500H1854.500V1005M479.500 744.500V1005H1854.500" fill="none" stroke="#000" strokeWidth="2" />
                <path d="M1854 746h6M1854 877h6M1854 1004h6" stroke="#000" strokeWidth="2" />
                <text {...textProps} fontSize="18.800" x="487" y="763">MACD(12,26,9) -0.003042 -0.003574</text>
                <text {...textProps} x="1859" y="759">0.013641</text>
                <text {...textProps} x="1859" y="877">0.00</text>
                <text {...textProps} x="1859" y="991">-0.013407</text>
              </svg>
              <svg width="1473" height="295" viewBox="472 1007 1473 295" className="shrink-0 overflow-visible">
                <path d="M482 1087H1854M482 1189H1854" stroke="#c0c0c0" strokeWidth="2" strokeDasharray="7 6" />
                <polyline points={rsiLine} fill="none" stroke="#1e90ff" strokeWidth="2" />
                <path d="M479.500 1009.500H1854.500V1265M479.500 1009.500V1265H1854.500" fill="none" stroke="#000" strokeWidth="2" />
                <path d="M1854 1010h6M1854 1087h6M1854 1189h6M1854 1264h6" stroke="#000" strokeWidth="2" />
                <text {...textProps} x="487" y="1027">RSI(14) 46.3542</text>
                <text {...textProps} x="1861" y="1023">100</text>
                <text {...textProps} x="1857" y="1088">70</text>
                <text {...textProps} x="1857" y="1189">30</text>
                <text {...textProps} x="1861" y="1251">0</text>
                {timeLabels.map(([t, x, tick]) => (
                  <g key={t}>
                    <path d={`M${tick} 1265v7`} stroke="#000" strokeWidth="2" />
                    <text {...textProps} x={x} y="1283">{t}</text>
                  </g>
                ))}
              </svg>
            </div>

            {/* chart tabs */}
            <div className="flex-1 flex items-start border-t-2 border-black -ml-[2px] text-[22px] text-[#777]">
              <div className="ml-[13px] w-[190px] h-[36px] pb-[2px] flex items-center justify-center bg-white border-x-2 border-b-2 border-black text-[#111]">EURUSD,Daily</div>
              <div className="ml-[22px] mt-[2px] w-[212px] h-[30px] flex items-center text-[23px] tracking-[0.3px]">XAUUSD,Monthly</div>
              <div className="mt-[2px] w-[2px] h-[32px] bg-[#888]" />
              <div className="ml-[17px] mt-[2px] w-[149px] h-[30px] flex items-center">XAUUSD,H4</div>
              <div className="mt-[2px] w-[2px] h-[32px] bg-[#888]" />
              <div className="ml-[21px] mt-[2px] w-[128px] h-[30px] flex items-center">US30,M15</div>
              <div className="mt-[2px] w-[2px] h-[32px] bg-[#888]" />
              <div className="ml-auto mr-[21px] mt-[7px] flex gap-[30px]">
                <svg width="8" height="16" viewBox="0 0 8 16"><path d="M8 0v16L0 8z" fill="#999" /></svg>
                <svg width="8" height="16" viewBox="0 0 8 16"><path d="M0 0v16l8-8z" fill="#999" /></svg>
              </div>
            </div>
          </div>
        </div>

        {/* status bar */}
        <div className="h-[44px] shrink-0 relative flex items-center border-t-2 border-white">
          <StatusCell className="w-[505px] pl-[4px] tracking-[0.6px]">For Help, press F1</StatusCell>
          <StatusCell className="w-[231px] pl-[11px] tracking-[1.4px]">Default</StatusCell>
          <StatusCell className="w-[204px] pl-[12px] tracking-[0.3px]">2017.08.31 00:00</StatusCell>
          <StatusCell className="w-[142px] pl-[12px] tracking-[0.4px]">O: 1.18892</StatusCell>
          <StatusCell className="w-[143px] pl-[13px] tracking-[0.4px]">H: 1.19094</StatusCell>
          <StatusCell className="w-[136px] pl-[12px] tracking-[0.4px]">L: 1.18228</StatusCell>
          <StatusCell className="w-[140px] pl-[12px] tracking-[0.4px]">C: 1.19047</StatusCell>
          <StatusCell className="w-[132px] pl-[11px] tracking-[0.4px]">V: 106132</StatusCell>
          <div className="ml-[11px] flex items-center text-[21px] tracking-[1.2px] text-[#111]">
            <svg width="46" height="28" viewBox="0 0 46 28" shapeRendering="crispEdges">
              {[0, 1, 2, 3, 4, 5, 6, 7, 8].map((i) => (
                <g key={i}>
                  <rect x={i * 5} y="0" width="3" height={18 - i * 2} fill="#5f7a00" />
                  <rect x={i * 5} y={19 - i * 2} width="3" height={9 + i * 2} fill="#9a1e08" />
                </g>
              ))}
            </svg>
            <span className="ml-[8px] pt-[3px]">43/0 kb</span>
          </div>
          <svg width="32" height="32" viewBox="0 0 32 32" className="absolute right-0 bottom-0">
            <path d="M2 32L32 2M10 32L32 10M18 32L32 18M26 32L32 26" stroke="#b4b4b4" strokeWidth="3" />
          </svg>
        </div>
      </div>

      {/* desktop strip under the window */}
      <div className="h-[12px] shrink-0" />
      <div className="h-[2px] shrink-0 bg-[#4a9bc8]" />
      <div className="h-[4px] shrink-0 flex bg-[#00a2e8]">
        <div className="ml-[130px] w-[26px] bg-[#111]" />
        <div className="ml-[609px] w-[29px] bg-[#111]" />
        <div className="ml-[813px] w-[46px] bg-[#123]" />
      </div>
    </div>
  );
}
